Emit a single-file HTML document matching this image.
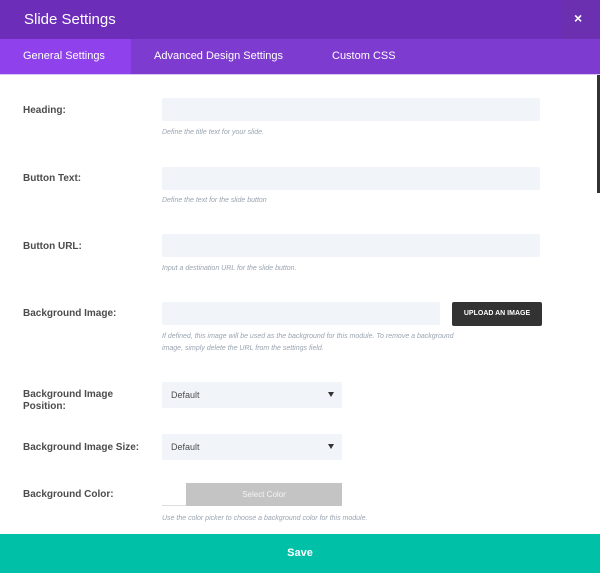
<!DOCTYPE html>
<html><head><meta charset="utf-8"><style>
*{margin:0;padding:0;box-sizing:border-box}
body{width:600px;height:573px;overflow:hidden;background:#fff;font-family:"Liberation Sans",sans-serif;position:relative}
.a{position:absolute}
.lbl{position:absolute;left:23px;font-size:10px;font-weight:bold;color:#4c4c4c;line-height:12px}
.in{position:absolute;left:162px;background:#f1f5f9;border-radius:2px}
.d{position:absolute;left:162px;font-size:7px;font-style:italic;color:#9aa4b0;line-height:12px}
.sel{position:absolute;left:162px;width:180px;height:26px;background:#f1f5f9;font-size:9px;color:#4c4c4c;padding:8px 0 0 9px}
.sel:after{content:"";position:absolute;right:8px;top:10px;border:3px solid transparent;border-top:5px solid #333;border-bottom:0}
</style></head><body>
<div class="a" style="left:0;top:0;width:600px;height:39px;background:#6c2eb9"></div>
<div class="a" style="left:561px;top:0;width:39px;height:39px;background:#6a30b0"></div>
<div class="a" style="left:24px;top:11px;font-size:15px;color:#fff;font-weight:300">Slide Settings</div>
<div class="a" style="left:574px;top:10px;font-size:14px;color:#fff;font-weight:bold">×</div>
<div class="a" style="left:0;top:39px;width:600px;height:35px;background:#7e3bd0"></div>
<div class="a" style="left:0;top:39px;width:131px;height:35px;background:#8f42ec"></div>
<div class="a" style="left:23px;top:50px;font-size:11px;color:#fff">General Settings</div>
<div class="a" style="left:154px;top:50px;font-size:11px;color:#fff">Advanced Design Settings</div>
<div class="a" style="left:332px;top:50px;font-size:11px;color:#fff">Custom CSS</div>
<div class="a" style="left:0;top:74px;width:600px;height:1px;background:#d9c7f2"></div>
<div class="a" style="left:597px;top:75px;width:3px;height:118px;background:#333"></div>

<div class="lbl" style="top:105px">Heading:</div>
<div class="in" style="top:98px;width:378px;height:23px"></div>
<div class="d" style="top:127px">Define the title text for your slide.</div>

<div class="lbl" style="top:173px">Button Text:</div>
<div class="in" style="top:167px;width:378px;height:23px"></div>
<div class="d" style="top:195px">Define the text for the slide button</div>

<div class="lbl" style="top:241px">Button URL:</div>
<div class="in" style="top:234px;width:378px;height:23px"></div>
<div class="d" style="top:263px">Input a destination URL for the slide button.</div>

<div class="lbl" style="top:308px">Background Image:</div>
<div class="in" style="top:302px;width:278px;height:23px"></div>
<div class="a" style="left:452px;top:302px;width:90px;height:24px;background:#333;border-radius:2px;color:#fff;font-size:7px;font-weight:bold;text-align:center;line-height:24px">UPLOAD AN IMAGE</div>
<div class="d" style="top:331px">If defined, this image will be used as the background for this module. To remove a background<br>image, simply delete the URL from the settings field.</div>

<div class="lbl" style="top:389px">Background Image<br>Position:</div>
<div class="sel" style="top:382px">Default</div>

<div class="lbl" style="top:442px">Background Image Size:</div>
<div class="sel" style="top:434px">Default</div>

<div class="lbl" style="top:489px">Background Color:</div>
<div class="a" style="left:162px;top:505px;width:24px;height:1px;background:#ddd"></div>
<div class="a" style="left:186px;top:483px;width:156px;height:23px;background:#c4c4c4;color:#f4f4f4;font-size:8px;text-align:center;line-height:23px">Select Color</div>
<div class="d" style="top:513px">Use the color picker to choose a background color for this module.</div>

<div class="a" style="left:0;top:534px;width:600px;height:39px;background:#00c1a7;color:#fff;font-size:11px;font-weight:bold;text-align:center;line-height:39px">Save</div>
</body></html>
